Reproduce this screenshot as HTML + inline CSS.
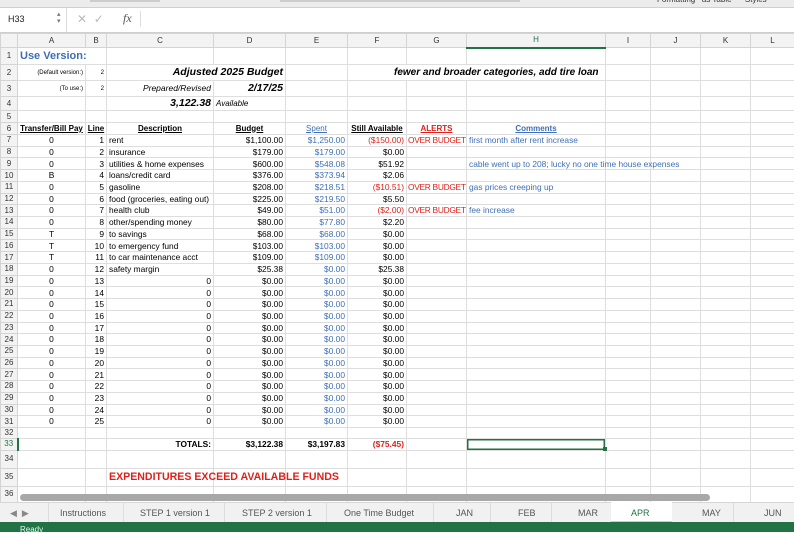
<!DOCTYPE html>
<html><head><meta charset="utf-8"><style>
*{margin:0;padding:0;box-sizing:border-box}
body{width:794px;height:532px;overflow:hidden;background:#fff;font-family:"Liberation Sans",sans-serif;position:relative}
#rib{position:absolute;left:0;top:0;width:794px;height:8px;background:#ececec;border-bottom:1px solid #d0d0d0}
#rib span{position:absolute;top:-5px;font-size:8px;color:#333}
#fb{position:absolute;left:0;top:8px;width:794px;height:25px;background:#fff;border-bottom:1px solid #cfcfcf}
#grid{position:absolute;left:0;top:33px;width:794px;border-collapse:collapse;table-layout:fixed;font-size:8.4px;color:#000}
#grid td{border:1px solid #dedede;padding:0 2px;white-space:nowrap;overflow:visible;line-height:1;vertical-align:middle}
#grid tr.h td{background:#f3f3f3;text-align:center;color:#333;font-size:8px;border-color:#d4d4d4}
#grid td.rh{background:#f3f3f3;text-align:center;color:#333;font-size:8px;border-color:#d4d4d4;padding:0}
.r{text-align:right}.c{text-align:center}.b{font-weight:bold}.i{font-style:italic}.u{text-decoration:underline}
.bl{color:#3d6fb6}.red{color:#e0201a}
.ob{letter-spacing:-0.3px;padding-left:1px!important}
#tabs{position:absolute;left:0;top:502px;width:794px;height:20px;background:#f1f1f1;border-top:1px solid #d6d6d6;font-size:9px;color:#555}
#tabs span{position:absolute;top:5px}
#status{position:absolute;left:0;top:522px;width:794px;height:10px;background:#217346}
</style></head><body>
<div id="rib"><span style="left:657px">Formatting&nbsp;&nbsp; as Table&nbsp;&nbsp;&nbsp;&nbsp;&nbsp; Styles</span>
<div style="position:absolute;left:90px;top:0;width:70px;height:2px;background:#fff;border:1px solid #ccc"></div>
<div style="position:absolute;left:280px;top:0;width:240px;height:2px;background:#fff;border:1px solid #ccc"></div></div>
<div id="fb">
<div style="position:absolute;left:8px;top:6px;font-size:9px;color:#222">H33</div>
<div style="position:absolute;left:57px;top:3px;font-size:7px;color:#777;line-height:7px">▴<br>▾</div>
<div style="position:absolute;left:66px;top:0;width:1px;height:24px;background:#ddd"></div>
<div style="position:absolute;left:77px;top:4px;font-size:12px;color:#bbb">✕&nbsp; ✓</div>
<div style="position:absolute;left:123px;top:3px;font-size:12px;font-style:italic;font-family:'Liberation Serif',serif;color:#555">fx</div>
<div style="position:absolute;left:140px;top:3px;width:1px;height:16px;background:#ddd"></div>
</div>
<table id="grid">
<colgroup><col style="width:17px"><col style="width:68px"><col style="width:21px"><col style="width:107px"><col style="width:72px"><col style="width:62px"><col style="width:59px"><col style="width:60px"><col style="width:139px"><col style="width:45px"><col style="width:50px"><col style="width:50px"><col style="width:44px"></colgroup>
<tr class="h" style="height:14px"><td></td><td>A</td><td>B</td><td>C</td><td>D</td><td>E</td><td>F</td><td>G</td><td style="border-bottom:2px solid #217346;color:#217346">H</td><td>I</td><td>J</td><td>K</td><td>L</td></tr>
<tr style="height:17px"><td class="rh">1</td><td colspan="2" class="b bl" style="font-size:11px">Use Version:</td><td></td><td></td><td></td><td></td><td></td><td></td><td></td><td></td><td></td><td></td></tr>
<tr style="height:16px"><td class="rh">2</td><td class="r" style="font-size:6px">(Default version:)</td><td class="r" style="font-size:6px">2</td><td colspan="2" class="r b i" style="font-size:10.5px">Adjusted 2025 Budget</td><td></td><td colspan="3" class="b i" style="font-size:10px;padding-left:46px">fewer and broader categories, add tire loan</td><td></td><td></td><td></td><td></td></tr>
<tr style="height:16px"><td class="rh">3</td><td class="r" style="font-size:6px">(To use:)</td><td class="r" style="font-size:6px">2</td><td class="r i" style="font-size:8.5px">Prepared/Revised</td><td class="r b i" style="font-size:10.5px">2/17/25</td><td></td><td></td><td></td><td></td><td></td><td></td><td></td><td></td></tr>
<tr style="height:14px"><td class="rh">4</td><td></td><td></td><td class="r b i" style="font-size:10.5px">3,122.38</td><td class="i" style="font-size:8px">Available</td><td></td><td></td><td></td><td></td><td></td><td></td><td></td><td></td></tr>
<tr style="height:12px"><td class="rh">5</td><td></td><td></td><td></td><td></td><td></td><td></td><td></td><td></td><td></td><td></td><td></td><td></td></tr>
<tr style="height:12px"><td class="rh">6</td><td class="c b u" style="font-size:8px">Transfer/Bill Pay</td><td class="c b u" style="font-size:8px;padding:0">Line</td><td class="c b u" style="font-size:8px">Description</td><td class="c b u" style="font-size:8px">Budget</td><td class="c u bl" style="font-size:8px">Spent</td><td class="c b u" style="font-size:8px">Still Available</td><td class="c b u red" style="font-size:8px">ALERTS</td><td class="c b u bl" style="font-size:8px">Comments</td><td></td><td></td><td></td><td></td></tr>
<tr style="height:11.72px"><td class="rh">7</td><td class="c">0</td><td class="r">1</td><td>rent</td><td class="r">$1,100.00</td><td class="r bl">$1,250.00</td><td class="r red">($150.00)</td><td class="red ob">OVER BUDGET</td><td class="bl">first month after rent increase</td><td></td><td></td><td></td><td></td></tr>
<tr style="height:11.72px"><td class="rh">8</td><td class="c">0</td><td class="r">2</td><td>insurance</td><td class="r">$179.00</td><td class="r bl">$179.00</td><td class="r">$0.00</td><td></td><td></td><td></td><td></td><td></td><td></td></tr>
<tr style="height:11.72px"><td class="rh">9</td><td class="c">0</td><td class="r">3</td><td>utilities &amp; home expenses</td><td class="r">$600.00</td><td class="r bl">$548.08</td><td class="r">$51.92</td><td></td><td class="bl">cable went up to 208; lucky no one time house expenses</td><td></td><td></td><td></td><td></td></tr>
<tr style="height:11.72px"><td class="rh">10</td><td class="c">B</td><td class="r">4</td><td>loans/credit card</td><td class="r">$376.00</td><td class="r bl">$373.94</td><td class="r">$2.06</td><td></td><td></td><td></td><td></td><td></td><td></td></tr>
<tr style="height:11.72px"><td class="rh">11</td><td class="c">0</td><td class="r">5</td><td>gasoline</td><td class="r">$208.00</td><td class="r bl">$218.51</td><td class="r red">($10.51)</td><td class="red ob">OVER BUDGET</td><td class="bl">gas prices creeping up</td><td></td><td></td><td></td><td></td></tr>
<tr style="height:11.72px"><td class="rh">12</td><td class="c">0</td><td class="r">6</td><td>food (groceries, eating out)</td><td class="r">$225.00</td><td class="r bl">$219.50</td><td class="r">$5.50</td><td></td><td></td><td></td><td></td><td></td><td></td></tr>
<tr style="height:11.72px"><td class="rh">13</td><td class="c">0</td><td class="r">7</td><td>health club</td><td class="r">$49.00</td><td class="r bl">$51.00</td><td class="r red">($2.00)</td><td class="red ob">OVER BUDGET</td><td class="bl">fee increase</td><td></td><td></td><td></td><td></td></tr>
<tr style="height:11.72px"><td class="rh">14</td><td class="c">0</td><td class="r">8</td><td>other/spending money</td><td class="r">$80.00</td><td class="r bl">$77.80</td><td class="r">$2.20</td><td></td><td></td><td></td><td></td><td></td><td></td></tr>
<tr style="height:11.72px"><td class="rh">15</td><td class="c">T</td><td class="r">9</td><td>to savings</td><td class="r">$68.00</td><td class="r bl">$68.00</td><td class="r">$0.00</td><td></td><td></td><td></td><td></td><td></td><td></td></tr>
<tr style="height:11.72px"><td class="rh">16</td><td class="c">T</td><td class="r">10</td><td>to emergency fund</td><td class="r">$103.00</td><td class="r bl">$103.00</td><td class="r">$0.00</td><td></td><td></td><td></td><td></td><td></td><td></td></tr>
<tr style="height:11.72px"><td class="rh">17</td><td class="c">T</td><td class="r">11</td><td>to car maintenance acct</td><td class="r">$109.00</td><td class="r bl">$109.00</td><td class="r">$0.00</td><td></td><td></td><td></td><td></td><td></td><td></td></tr>
<tr style="height:11.72px"><td class="rh">18</td><td class="c">0</td><td class="r">12</td><td>safety margin</td><td class="r">$25.38</td><td class="r bl">$0.00</td><td class="r">$25.38</td><td></td><td></td><td></td><td></td><td></td><td></td></tr>
<tr style="height:11.72px"><td class="rh">19</td><td class="c">0</td><td class="r">13</td><td class="r">0</td><td class="r">$0.00</td><td class="r bl">$0.00</td><td class="r">$0.00</td><td></td><td></td><td></td><td></td><td></td><td></td></tr>
<tr style="height:11.72px"><td class="rh">20</td><td class="c">0</td><td class="r">14</td><td class="r">0</td><td class="r">$0.00</td><td class="r bl">$0.00</td><td class="r">$0.00</td><td></td><td></td><td></td><td></td><td></td><td></td></tr>
<tr style="height:11.72px"><td class="rh">21</td><td class="c">0</td><td class="r">15</td><td class="r">0</td><td class="r">$0.00</td><td class="r bl">$0.00</td><td class="r">$0.00</td><td></td><td></td><td></td><td></td><td></td><td></td></tr>
<tr style="height:11.72px"><td class="rh">22</td><td class="c">0</td><td class="r">16</td><td class="r">0</td><td class="r">$0.00</td><td class="r bl">$0.00</td><td class="r">$0.00</td><td></td><td></td><td></td><td></td><td></td><td></td></tr>
<tr style="height:11.72px"><td class="rh">23</td><td class="c">0</td><td class="r">17</td><td class="r">0</td><td class="r">$0.00</td><td class="r bl">$0.00</td><td class="r">$0.00</td><td></td><td></td><td></td><td></td><td></td><td></td></tr>
<tr style="height:11.72px"><td class="rh">24</td><td class="c">0</td><td class="r">18</td><td class="r">0</td><td class="r">$0.00</td><td class="r bl">$0.00</td><td class="r">$0.00</td><td></td><td></td><td></td><td></td><td></td><td></td></tr>
<tr style="height:11.72px"><td class="rh">25</td><td class="c">0</td><td class="r">19</td><td class="r">0</td><td class="r">$0.00</td><td class="r bl">$0.00</td><td class="r">$0.00</td><td></td><td></td><td></td><td></td><td></td><td></td></tr>
<tr style="height:11.72px"><td class="rh">26</td><td class="c">0</td><td class="r">20</td><td class="r">0</td><td class="r">$0.00</td><td class="r bl">$0.00</td><td class="r">$0.00</td><td></td><td></td><td></td><td></td><td></td><td></td></tr>
<tr style="height:11.72px"><td class="rh">27</td><td class="c">0</td><td class="r">21</td><td class="r">0</td><td class="r">$0.00</td><td class="r bl">$0.00</td><td class="r">$0.00</td><td></td><td></td><td></td><td></td><td></td><td></td></tr>
<tr style="height:11.72px"><td class="rh">28</td><td class="c">0</td><td class="r">22</td><td class="r">0</td><td class="r">$0.00</td><td class="r bl">$0.00</td><td class="r">$0.00</td><td></td><td></td><td></td><td></td><td></td><td></td></tr>
<tr style="height:11.72px"><td class="rh">29</td><td class="c">0</td><td class="r">23</td><td class="r">0</td><td class="r">$0.00</td><td class="r bl">$0.00</td><td class="r">$0.00</td><td></td><td></td><td></td><td></td><td></td><td></td></tr>
<tr style="height:11.72px"><td class="rh">30</td><td class="c">0</td><td class="r">24</td><td class="r">0</td><td class="r">$0.00</td><td class="r bl">$0.00</td><td class="r">$0.00</td><td></td><td></td><td></td><td></td><td></td><td></td></tr>
<tr style="height:11.72px"><td class="rh">31</td><td class="c">0</td><td class="r">25</td><td class="r">0</td><td class="r">$0.00</td><td class="r bl">$0.00</td><td class="r">$0.00</td><td></td><td></td><td></td><td></td><td></td><td></td></tr>
<tr style="height:11px"><td class="rh">32</td><td></td><td></td><td></td><td></td><td></td><td></td><td></td><td></td><td></td><td></td><td></td><td></td></tr>
<tr style="height:12px"><td class="rh" style="color:#217346;border-right:2px solid #217346">33</td><td></td><td></td><td class="r b">TOTALS:</td><td class="r b">$3,122.38</td><td class="r b">$3,197.83</td><td class="r b red">($75.45)</td><td></td><td style="box-shadow:inset 0 0 0 1.5px #217346"></td><td></td><td></td><td></td><td></td></tr>
<tr style="height:18px"><td class="rh">34</td><td></td><td></td><td></td><td></td><td></td><td></td><td></td><td></td><td></td><td></td><td></td><td></td></tr>
<tr style="height:18px"><td class="rh">35</td><td></td><td></td><td class="b red" style="font-size:10.6px">EXPENDITURES EXCEED AVAILABLE FUNDS</td><td></td><td></td><td></td><td></td><td></td><td></td><td></td><td></td><td></td></tr>
<tr style="height:16px"><td class="rh">36</td><td></td><td></td><td></td><td></td><td></td><td></td><td></td><td></td><td></td><td></td><td></td><td></td></tr>
</table>
<div style="position:absolute;left:20px;top:494px;width:690px;height:7px;border-radius:4px;background:#a8a8a8"></div>
<div style="position:absolute;left:603px;top:447px;width:4px;height:4px;background:#217346"></div>
<div id="tabs">
<span style="left:10px;color:#888">◀&nbsp; ▶</span>
<div style="position:absolute;left:48px;top:0;width:1px;height:19px;background:#ddd"></div>
<span style="left:60px">Instructions</span>
<div style="position:absolute;left:123px;top:0;width:1px;height:19px;background:#ddd"></div>
<span style="left:140px">STEP 1 version 1</span>
<div style="position:absolute;left:224px;top:0;width:1px;height:19px;background:#ddd"></div>
<span style="left:242px">STEP 2 version 1</span>
<div style="position:absolute;left:326px;top:0;width:1px;height:19px;background:#ddd"></div>
<span style="left:344px">One Time Budget</span>
<div style="position:absolute;left:433px;top:0;width:1px;height:19px;background:#ddd"></div>
<span style="left:456px">JAN</span>
<div style="position:absolute;left:490px;top:0;width:1px;height:19px;background:#ddd"></div>
<span style="left:518px">FEB</span>
<div style="position:absolute;left:551px;top:0;width:1px;height:19px;background:#ddd"></div>
<span style="left:578px">MAR</span>
<div style="position:absolute;left:611px;top:-1px;width:61px;height:20px;background:#fff;border-bottom:1px solid #ccc"></div>
<span style="left:631px;color:#217346">APR</span>
<span style="left:702px">MAY</span>
<div style="position:absolute;left:733px;top:0;width:1px;height:19px;background:#ddd"></div>
<span style="left:764px">JUN</span>
</div>
<div id="status"><span style="position:absolute;left:20px;top:3px;font-size:8px;color:#dfe">Ready</span></div>
</body></html>
